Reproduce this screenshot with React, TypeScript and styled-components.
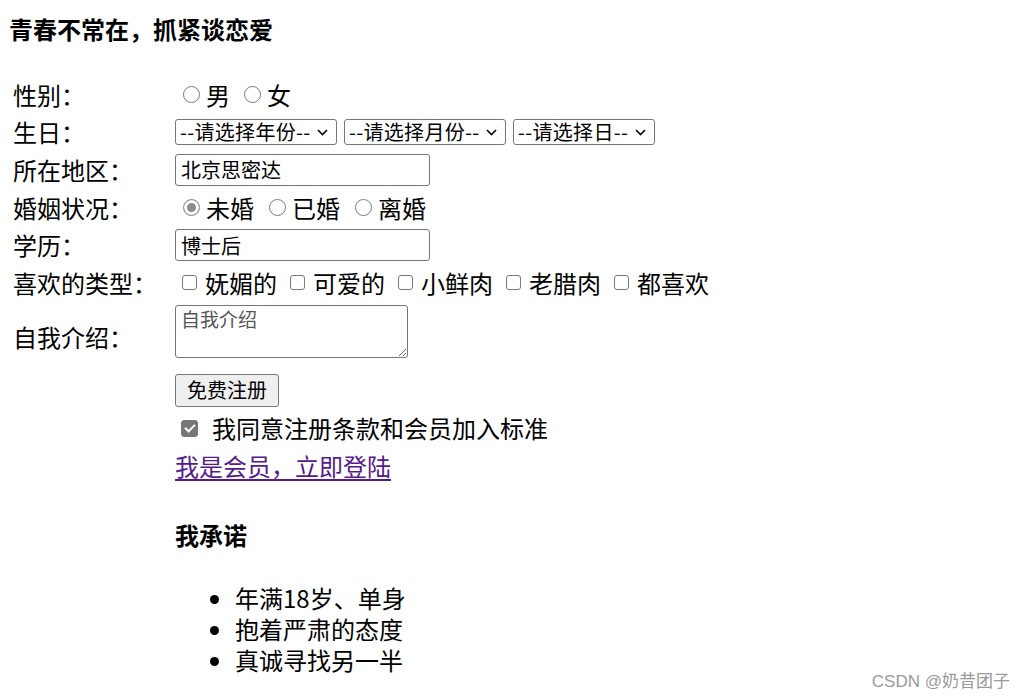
import React from "react";
import styled, { createGlobalStyle } from "styled-components";

const GlobalStyle = createGlobalStyle`
  html, body { margin: 0; padding: 0; background: #fff; }
  body {
    font-family: "Noto Sans CJK SC", "Microsoft YaHei", sans-serif;
    font-size: 24px;
    color: #000;
  }
  #root { position: relative; min-height: 700px; }
`;

const Page = styled.div`
  padding: 13px 0 0 9px;
`;

const Title = styled.h4`
  margin: 0;
  font-size: 24px;
  line-height: 32px;
  font-weight: 700;
`;

const Form = styled.form`
  display: flex;
  flex-direction: column;
  margin: 31px 0 0 4px;
`;

const Row = styled.div<{ $h: number }>`
  display: grid;
  grid-template-columns: 162px 1fr;
  align-items: center;
  height: ${(p) => p.$h}px;
`;

const Label = styled.span`
  line-height: 32px;
  white-space: nowrap;
`;

const Field = styled.div<{ $gap?: number; $top?: boolean; $indent?: number }>`
  display: flex;
  align-items: center;
  gap: ${(p) => p.$gap ?? 0}px;
  align-self: ${(p) => (p.$top ? "start" : "center")};
  padding-top: ${(p) => (p.$top ? "3.4px" : "0")};
  padding-left: ${(p) => p.$indent ?? 0}px;
  line-height: 32px;
  white-space: nowrap;
`;

const Option = styled.label<{ $gap: number }>`
  display: inline-flex;
  align-items: center;
  gap: ${(p) => p.$gap}px;
`;

const Radio = styled.input.attrs({ type: "radio" })`
  appearance: none;
  margin: 0;
  width: 17px;
  height: 17px;
  box-sizing: border-box;
  border: 1.5px solid #7a7a7a;
  border-radius: 50%;
  background: #fff;
  flex: none;
  &:checked {
    border-color: #8d8d8d;
    background: #8d8d8d;
    box-shadow: inset 0 0 0 3px #fff;
  }
`;

const Check = styled.input.attrs({ type: "checkbox" })<{ $size: number }>`
  appearance: none;
  margin: 0;
  width: ${(p) => p.$size}px;
  height: ${(p) => p.$size}px;
  box-sizing: border-box;
  border: 1.5px solid #7a7a7a;
  border-radius: 3px;
  background: #fff;
  flex: none;
  position: relative;
  &:checked {
    background: #777;
    border-color: #777;
  }
  &:checked::after {
    content: "";
    position: absolute;
    left: 4.5px;
    top: 1px;
    width: 4px;
    height: 8px;
    border: solid #fff;
    border-width: 0 2.5px 2.5px 0;
    transform: rotate(45deg);
  }
`;

const SelectWrap = styled.span<{ $w: number }>`
  position: relative;
  display: flex;
  flex: none;
  width: ${(p) => p.$w}px;
  height: 26px;
`;

const Select = styled.select`
  appearance: none;
  -webkit-appearance: none;
  width: 100%;
  height: 26px;
  box-sizing: border-box;
  font: 20px/24px "Noto Sans CJK SC", sans-serif;
  letter-spacing: 0.3px;
  color: #000;
  border: 1px solid #767676;
  border-radius: 3px;
  background: #fff;
  padding: 0 0 0 4px;
  margin: 0;
  & option {
    font: 20px/24px "Noto Sans CJK SC", sans-serif;
  }
`;

const Chevron = styled.svg`
  position: absolute;
  right: 9px;
  top: 10px;
  width: 11px;
  height: 7px;
  pointer-events: none;
`;

const TextInput = styled.input`
  width: 255px;
  height: 32px;
  box-sizing: border-box;
  font-family: "Noto Sans CJK SC", sans-serif;
  font-size: 20px;
  color: #000;
  border: 1px solid #767676;
  border-radius: 3px;
  padding: 0 5px;
  margin: 0;
`;

const TextArea = styled.textarea`
  width: 233px;
  height: 53px;
  box-sizing: border-box;
  font-family: "Noto Sans CJK SC", sans-serif;
  font-size: 19px;
  line-height: 26px;
  border: 1px solid #767676;
  border-radius: 3px;
  padding: 0 5px;
  margin: 0;
  &::placeholder { color: #555; }
`;

const Button = styled.button`
  width: 104px;
  height: 33px;
  box-sizing: border-box;
  font-family: "Noto Sans CJK SC", sans-serif;
  font-size: 20px;
  line-height: 26px;
  color: #000;
  background: #efefef;
  border: 1px solid #767676;
  border-radius: 3px;
  padding: 0;
  margin: 0;
`;

const Link = styled.a`
  color: #551a8b;
  text-decoration: underline;
  text-underline-offset: 3px;
  font-size: 24px;
`;

const Pledge = styled.div`
  margin: 33.8px 0 0 166px;
`;

const PledgeTitle = styled.h4`
  margin: 0;
  font-size: 24px;
  line-height: 32px;
  font-weight: 700;
`;

const List = styled.ul`
  margin: 31.5px 0 0;
  padding-left: 60px;
  line-height: 31px;
  list-style: disc;
`;

const Watermark = styled.div`
  position: absolute;
  right: 15px;
  bottom: 7px;
  font-family: "Liberation Sans", "Noto Sans CJK SC", sans-serif;
  font-size: 17px;
  line-height: 22px;
  color: #9a9a9a;
`;

function DropDown({ w, text }: { w: number; text: string }) {
  return (
    <SelectWrap $w={w}>
      <Select defaultValue="0">
        <option value="0">{text}</option>
      </Select>
      <Chevron viewBox="0 0 11 7">
        <polyline points="1,1 5.5,5.5 10,1" fill="none" stroke="#000" strokeWidth="1.6" />
      </Chevron>
    </SelectWrap>
  );
}

export default function App() {
  return (
    <>
      <GlobalStyle />
      <Page>
        <Title>青春不常在，抓紧谈恋爱</Title>
        <Form onSubmit={(e) => e.preventDefault()}>
          <Row $h={37.6}>
            <Label>性别：</Label>
            <Field $gap={14} $indent={8}>
              <Option $gap={6}><Radio name="sex" />男</Option>
              <Option $gap={6}><Radio name="sex" />女</Option>
            </Field>
          </Row>
          <Row $h={37.6}>
            <Label>生日：</Label>
            <Field $gap={7}>
              <DropDown w={162} text="--请选择年份--" />
              <DropDown w={162} text="--请选择月份--" />
              <DropDown w={142} text="--请选择日--" />
            </Field>
          </Row>
          <Row $h={37.6}>
            <Label>所在地区：</Label>
            <Field>
              <TextInput defaultValue="北京思密达" />
            </Field>
          </Row>
          <Row $h={37.6}>
            <Label>婚姻状况：</Label>
            <Field $gap={15} $indent={8}>
              <Option $gap={6}><Radio name="marry" defaultChecked />未婚</Option>
              <Option $gap={6}><Radio name="marry" />已婚</Option>
              <Option $gap={6}><Radio name="marry" />离婚</Option>
            </Field>
          </Row>
          <Row $h={37.6}>
            <Label>学历：</Label>
            <Field>
              <TextInput defaultValue="博士后" />
            </Field>
          </Row>
          <Row $h={37.6}>
            <Label>喜欢的类型：</Label>
            <Field $gap={13} $indent={7}>
              <Option $gap={8}><Check $size={15} />妩媚的</Option>
              <Option $gap={8}><Check $size={15} />可爱的</Option>
              <Option $gap={8}><Check $size={15} />小鲜肉</Option>
              <Option $gap={8}><Check $size={15} />老腊肉</Option>
              <Option $gap={8}><Check $size={15} />都喜欢</Option>
            </Field>
          </Row>
          <Row $h={70}>
            <Label>自我介绍：</Label>
            <Field $top>
              <TextArea placeholder="自我介绍" />
            </Field>
          </Row>
          <Row $h={37.4}>
            <span />
            <Field>
              <Button type="button">免费注册</Button>
            </Field>
          </Row>
          <Row $h={38.6}>
            <span />
            <Field $indent={6}>
              <Option $gap={14}><Check $size={17} defaultChecked />我同意注册条款和会员加入标准</Option>
            </Field>
          </Row>
          <Row $h={37.6}>
            <span />
            <Field>
              <Link href="#">我是会员，立即登陆</Link>
            </Field>
          </Row>
        </Form>
        <Pledge>
          <PledgeTitle>我承诺</PledgeTitle>
          <List>
            <li>年满18岁、单身</li>
            <li>抱着严肃的态度</li>
            <li>真诚寻找另一半</li>
          </List>
        </Pledge>
      </Page>
      <Watermark>CSDN @奶昔团子</Watermark>
    </>
  );
}
